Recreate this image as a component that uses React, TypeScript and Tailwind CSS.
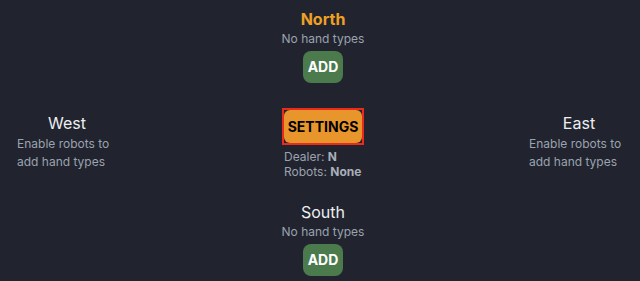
import React from "react";

type Seat = "North" | "East" | "South" | "West";

function AddButton() {
  return (
    <button
      type="button"
      className="mt-1 flex h-8 w-10 items-center justify-center rounded-lg bg-[#4b7a4c] text-sm font-bold text-white"
    >
      ADD
    </button>
  );
}

function PlayerSeat({ seat, active }: { seat: Seat; active?: boolean }) {
  return (
    <div className="flex flex-col items-center">
      <h2
        className={
          active
            ? "text-base font-bold leading-6 text-[#f0a024]"
            : "text-base leading-6 text-[#eceef2]"
        }
      >
        {seat}
      </h2>
      <p className="text-xs leading-4 text-[#9ba2ae]">No hand types</p>
      <AddButton />
    </div>
  );
}

function RobotSeat({ seat }: { seat: Seat }) {
  return (
    <div className="mt-[3px] flex w-[100px] flex-col items-center">
      <h2 className="text-base leading-6 text-[#eceef2]">{seat}</h2>
      <p className="w-full text-left text-xs leading-[18px] text-[#9ba2ae]">
        Enable robots to add hand types
      </p>
    </div>
  );
}

export default function App() {
  return (
    <main
      className="flex h-[281px] w-full flex-col overflow-hidden bg-[#21242e] pt-[7px] pl-[17px] pr-[11px]"
      style={{ fontFamily: "Inter, 'Noto Sans', sans-serif" }}
    >
      <PlayerSeat seat="North" active />

      <div className="mt-[25px] flex items-start justify-between">
        <RobotSeat seat="West" />

        <div className="flex w-[82px] flex-col">
          <div className="border-2 border-[#ea2a1c]">
            <button
              type="button"
              className="flex h-[33px] w-full items-center justify-center rounded-md bg-[#e8962b] text-sm font-bold text-black"
            >
              SETTINGS
            </button>
          </div>
          <div className="mt-1 pl-[2px] text-xs leading-[15px] whitespace-nowrap text-[#9ba2ae]">
            <p>
              Dealer: <span className="font-bold text-[#a9afba]">N</span>
            </p>
            <p>
              Robots: <span className="font-bold text-[#a9afba]">None</span>
            </p>
          </div>
        </div>

        <RobotSeat seat="East" />
      </div>

      <div className="mt-[21px]">
        <PlayerSeat seat="South" />
      </div>
    </main>
  );
}
